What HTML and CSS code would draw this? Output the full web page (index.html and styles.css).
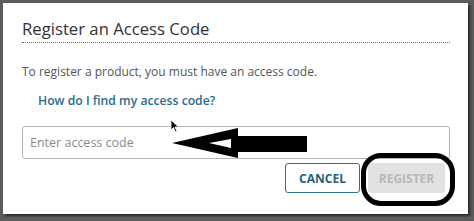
FILE: index.html
```html
<!DOCTYPE html>
<html lang="en">
<head>
    <meta charset="UTF-8">
    <meta name="viewport" content="width=device-width, initial-scale=1.0">
    <title>Register an Access Code</title>
    <link rel="stylesheet" href="styles.css">
</head>
<body>
    <div class="dialog">
        <h2 class="dialog-title">Register an Access Code</h2>
        <p class="intro">To register a product, you must have an access code.</p>
        <a href="#" class="help-link">How do I find my access code?</a>
        <input type="text" class="code-input" placeholder="Enter access code">
        <div class="actions">
            <button class="btn btn-cancel">CANCEL</button>
            <button class="btn btn-register" disabled>REGISTER</button>
        </div>

        <!-- Markierungen aus dem Screenshot -->
        <svg class="arrow" width="140" height="34" viewBox="0 0 140 34">
            <path d="M0 15 L66 0 L66 8 L135 8 L135 24 L66 24 L66 30 Z M37 15 L59 11 L59 20 Z" fill="#000" fill-rule="evenodd"/>
        </svg>
        <svg class="cursor" width="10" height="14" viewBox="0 0 10 14">
            <path d="M1 1 L1 11 L3.5 8.5 L5.5 13 L7 12.3 L5 8 L8.5 8 Z" fill="#000" stroke="#fff" stroke-width="0.8"/>
        </svg>
    </div>
</body>
</html>
```

FILE: styles.css
```css
body {
    margin: 0;
    padding: 0;
    background-color: #5c5c5c;
    font-family: "Open Sans", "Liberation Sans", sans-serif;
}
.dialog {
    position: relative;
    box-sizing: border-box;
    width: 465px;
    height: 211px;
    margin: 3px;
    padding: 14px 18px 0 19px;
    background-color: #ffffff;
    box-shadow: 2px 2px 3px rgba(0, 0, 0, 0.6);
}
.dialog-title {
    margin: 0;
    padding-bottom: 1px;
    font-size: 16.7px;
    font-weight: normal;
    line-height: 24px;
    color: #333333;
    border-bottom: 1px dotted #3a7ca5;
}
.intro {
    margin: 20px 0 0 0;
    font-size: 12px;
    line-height: 18px;
    color: #555555;
}
.help-link {
    display: block;
    margin: 11px 0 0 16px;
    font-size: 12.2px;
    font-weight: 600;
    line-height: 18px;
    color: #2b6a8c;
    text-decoration: none;
}
.code-input {
    display: block;
    box-sizing: border-box;
    width: 428px;
    height: 33px;
    margin-top: 16px;
    padding: 0 7px;
    font-family: inherit;
    font-size: 12.5px;
    color: #333333;
    border: 1px solid #b5b5b5;
    border-radius: 3px;
    outline: none;
}
.code-input::placeholder {
    color: #8a8a8a;
}
.actions {
    display: flex;
    justify-content: flex-end;
    gap: 8px;
    margin-top: 4px;
    padding-right: 5px;
}
.btn {
    box-sizing: border-box;
    height: 30px;
    padding: 0;
    font-family: inherit;
    font-size: 12px;
    font-weight: 700;
    border-radius: 3px;
}
.btn-cancel {
    width: 75px;
    color: #2c5f7c;
    background-color: #ffffff;
    border: 1px solid #2f7193;
}
.btn-register {
    position: relative;
    width: 77px;
    color: #b8b8b8;
    background-color: #e2e2e2;
    border: 1px solid #e2e2e2;
}
/* schwarzer Ring um den Register-Button */
.btn-register:after {
    content: "";
    position: absolute;
    top: -11px;
    left: -8px;
    right: -11px;
    bottom: -14px;
    border: 5px solid #000000;
    border-radius: 20px;
}
.arrow {
    position: absolute;
    left: 169px;
    top: 125px;
}
.cursor {
    position: absolute;
    left: 167px;
    top: 116px;
}
```
